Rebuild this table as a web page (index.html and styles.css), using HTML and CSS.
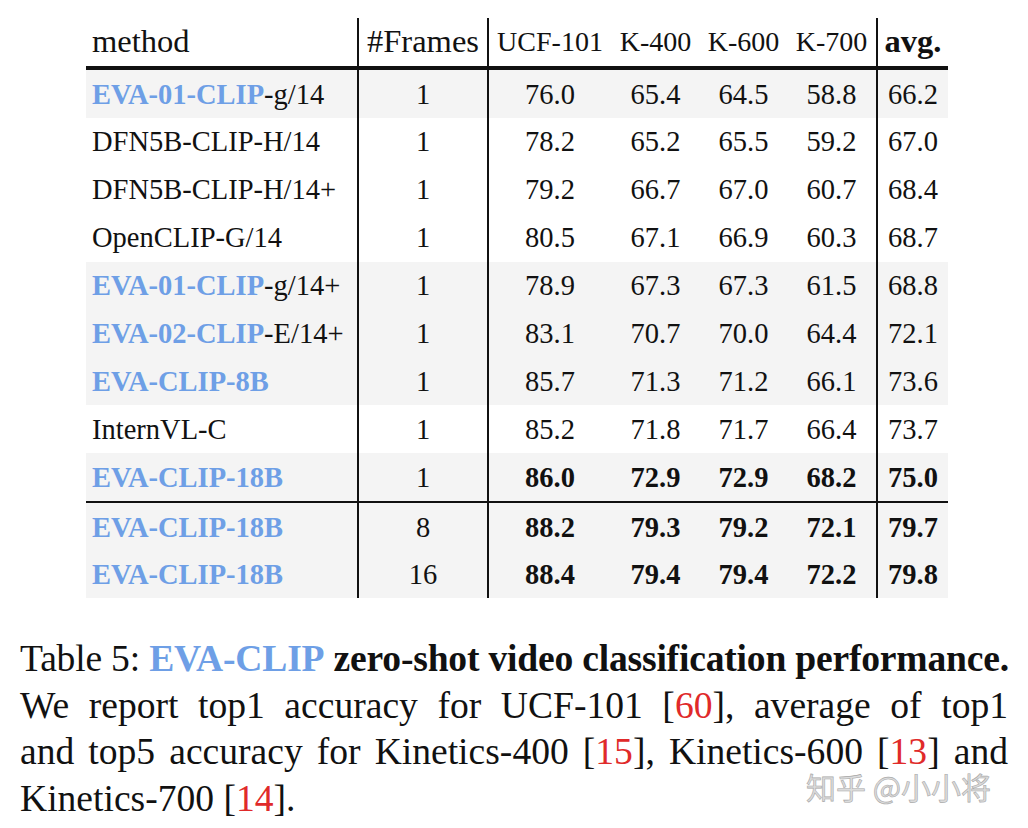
FILE: index.html
```html
<!DOCTYPE html>
<html lang="en">
<head>
<meta charset="utf-8">
<title>Table 5: EVA-CLIP zero-shot video classification</title>
<link rel="stylesheet" href="styles.css">
</head>
<body>
<div class="page">
  <div class="tbl">
    <div class="row head">
      <div class="hc big m">method</div>
      <div class="hc big vl">#Frames</div>
      <div class="hc small vl">UCF-101</div>
      <div class="hc small">K-400</div>
      <div class="hc small">K-600</div>
      <div class="hc small">K-700</div>
      <div class="hc big vl b">avg.</div>
    </div>
    <div class="rule"></div>

    <div class="row shade">
      <div class="cell m"><span class="eva">EVA-01-CLIP</span>-g/14</div>
      <div class="cell vl">1</div>
      <div class="cell vl">76.0</div><div class="cell">65.4</div><div class="cell">64.5</div><div class="cell">58.8</div>
      <div class="cell vl">66.2</div>
    </div>
    <div class="row">
      <div class="cell m">DFN5B-CLIP-H/14</div>
      <div class="cell vl">1</div>
      <div class="cell vl">78.2</div><div class="cell">65.2</div><div class="cell">65.5</div><div class="cell">59.2</div>
      <div class="cell vl">67.0</div>
    </div>
    <div class="row">
      <div class="cell m">DFN5B-CLIP-H/14+</div>
      <div class="cell vl">1</div>
      <div class="cell vl">79.2</div><div class="cell">66.7</div><div class="cell">67.0</div><div class="cell">60.7</div>
      <div class="cell vl">68.4</div>
    </div>
    <div class="row">
      <div class="cell m">OpenCLIP-G/14</div>
      <div class="cell vl">1</div>
      <div class="cell vl">80.5</div><div class="cell">67.1</div><div class="cell">66.9</div><div class="cell">60.3</div>
      <div class="cell vl">68.7</div>
    </div>
    <div class="row shade">
      <div class="cell m"><span class="eva">EVA-01-CLIP</span>-g/14+</div>
      <div class="cell vl">1</div>
      <div class="cell vl">78.9</div><div class="cell">67.3</div><div class="cell">67.3</div><div class="cell">61.5</div>
      <div class="cell vl">68.8</div>
    </div>
    <div class="row shade">
      <div class="cell m"><span class="eva">EVA-02-CLIP</span>-E/14+</div>
      <div class="cell vl">1</div>
      <div class="cell vl">83.1</div><div class="cell">70.7</div><div class="cell">70.0</div><div class="cell">64.4</div>
      <div class="cell vl">72.1</div>
    </div>
    <div class="row shade">
      <div class="cell m"><span class="eva">EVA-CLIP-8B</span></div>
      <div class="cell vl">1</div>
      <div class="cell vl">85.7</div><div class="cell">71.3</div><div class="cell">71.2</div><div class="cell">66.1</div>
      <div class="cell vl">73.6</div>
    </div>
    <div class="row">
      <div class="cell m">InternVL-C</div>
      <div class="cell vl">1</div>
      <div class="cell vl">85.2</div><div class="cell">71.8</div><div class="cell">71.7</div><div class="cell">66.4</div>
      <div class="cell vl">73.7</div>
    </div>
    <div class="row shade">
      <div class="cell m"><span class="eva">EVA-CLIP-18B</span></div>
      <div class="cell vl">1</div>
      <div class="cell vl b">86.0</div><div class="cell b">72.9</div><div class="cell b">72.9</div><div class="cell b">68.2</div>
      <div class="cell vl b">75.0</div>
    </div>
    <div class="row shade sep">
      <div class="cell m"><span class="eva">EVA-CLIP-18B</span></div>
      <div class="cell vl">8</div>
      <div class="cell vl b">88.2</div><div class="cell b">79.3</div><div class="cell b">79.2</div><div class="cell b">72.1</div>
      <div class="cell vl b">79.7</div>
    </div>
    <div class="row shade tail">
      <div class="cell m"><span class="eva">EVA-CLIP-18B</span></div>
      <div class="cell vl">16</div>
      <div class="cell vl b">88.4</div><div class="cell b">79.4</div><div class="cell b">79.4</div><div class="cell b">72.2</div>
      <div class="cell vl b">79.8</div>
    </div>
  </div>

  <p class="caption">
    <span class="ln first">Table 5: <b class="eva">EVA-CLIP</b> <b>zero-shot video classification performance.</b></span>
    <span class="ln">We report top1 accuracy for UCF-101 [<span class="ref">60</span>], average of top1</span>
    <span class="ln">and top5 accuracy for Kinetics-400 [<span class="ref">15</span>], Kinetics-600 [<span class="ref">13</span>] and</span>
    <span class="ln last">Kinetics-700 [<span class="ref">14</span>].</span>
  </p>

  <div class="watermark">知乎 @小小将</div>
</div>
</body>
</html>
```

FILE: styles.css
```css
html, body {
  margin: 0;
  padding: 0;
  background: #ffffff;
}

body {
  font-family: "Liberation Serif", "Times New Roman", serif;
  color: #111111;
}

.page {
  position: relative;
  width: 1028px;
  height: 828px;
  padding-top: 18px;
  box-sizing: border-box;
  overflow: hidden;
}

.tbl {
  margin-left: 86px;
  width: 862px;
}

.row {
  display: grid;
  grid-template-columns: 271px 130px 124px 89px 87px 89px 72px;
  height: 47.9px;
  box-sizing: border-box;
}

.row.head {
  height: 48px;
}

.row.sep {
  border-top: 2px solid #111111;
  height: 49.5px;
}

.row.tail {
  height: 47.5px;
}

.shade {
  background: #f4f4f4;
}

.rule {
  height: 4px;
  background: #111111;
}

.hc,
.cell {
  box-sizing: border-box;
  line-height: 1;
  text-align: center;
  white-space: nowrap;
}

.hc.big {
  font-size: 32.5px;
  padding-top: 6.5px;
}

.hc.small {
  font-size: 28px;
  padding-top: 10px;
}

.cell {
  font-size: 28.5px;
  padding-top: 10.5px;
}

.m {
  text-align: left;
  padding-left: 6px;
}

.vl {
  border-left: 2px solid #111111;
}

.b {
  font-weight: bold;
}

.eva {
  color: #6e9fe6;
  font-weight: bold;
}

.caption {
  margin: 38px 0 0 20px;
  width: 988px;
  font-size: 37.6px;
  line-height: 46.7px;
}

.ln {
  display: block;
  text-align: justify;
  text-align-last: justify;
}

.ln.first {
  white-space: nowrap;
  text-align-last: left;
  letter-spacing: -0.2px;
}

.ln.last {
  width: fit-content;
  text-align-last: left;
}

.ref {
  color: #e02a2a;
}

.watermark {
  position: absolute;
  left: 806px;
  top: 771px;
  font-family: "Noto Sans CJK SC", "Noto Sans", sans-serif;
  font-size: 30px;
  line-height: 1;
  color: #dcdcdc;
  -webkit-text-stroke: 0.6px #a8a8a8;
}
```
